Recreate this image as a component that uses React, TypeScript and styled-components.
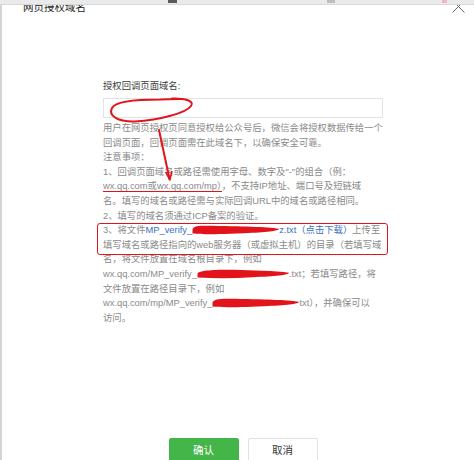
import React from 'react';
import styled, { createGlobalStyle } from 'styled-components';

const GlobalStyle = createGlobalStyle`
  html, body {
    margin: 0;
    padding: 0;
    background: #ffffff;
  }
  body {
    font-family: "Liberation Sans", "Noto Sans CJK SC", sans-serif;
  }
`;

const RED = '#e3131b';

const Page = styled.div`
  position: relative;
  width: 474px;
  height: 460px;
  overflow: hidden;
  background: #ffffff;
  display: flex;
  flex-direction: column;
`;

const TopStrip = styled.div`
  position: relative;
  z-index: 2;
  flex-shrink: 0;
  height: 5px;
  box-sizing: border-box;
  background: #eaeaea;
  border-bottom: 1px solid #d8d8d8;
  display: flex;
  align-items: flex-start;
`;

const StripMark = styled.span<{ $left: number; $width: number; $color: string }>`
  flex-shrink: 0;
  margin-left: ${(p) => p.$left}px;
  width: ${(p) => p.$width}px;
  height: 3px;
  background: ${(p) => p.$color};
`;

const Dialog = styled.div`
  flex: 1;
  width: 482px;
  flex-shrink: 0;
  border-left: 2px solid #d4d4d4;
  display: flex;
  flex-direction: column;
`;

const Header = styled.div`
  position: relative;
  z-index: 1;
  margin-top: -8px;
  height: 20px;
  padding: 0 19px 0 21px;
  display: flex;
  justify-content: space-between;
  align-items: flex-start;
`;

const Title = styled.div`
  font-size: 10.5px;
  line-height: 20px;
  color: #222222;
  font-family: "Liberation Sans", "Noto Sans CJK SC", sans-serif;
`;

const CloseIcon = styled.svg`
  margin-top: 3px;
  width: 13px;
  height: 13px;
`;

const Form = styled.div`
  width: 280px;
  margin: 62px auto 0;
  font-size: 9.33px;
  line-height: 14.6px;
`;

const Label = styled.div`
  color: #3c3c3c;
`;

const Input = styled.div`
  margin-top: 4.7px;
  height: 20px;
  box-sizing: border-box;
  border: 1px solid #e3e3e3;
  background: #ffffff;
`;

const Help = styled.div`
  margin-top: 2.7px;
  color: #8a8a8a;
`;

const Line = styled.div`
  white-space: nowrap;
`;

const Marked = styled.span`
  border-bottom: 1.4px solid ${RED};
`;

const Link = styled.span`
  color: #3b6fc2;
`;

const Boxed = styled.div`
  position: relative;
  &::after {
    content: "";
    position: absolute;
    left: -6px;
    right: -4.5px;
    top: -0.5px;
    bottom: -2.5px;
    border: 1.6px solid ${RED};
    border-radius: 3px;
    pointer-events: none;
  }
`;

const ScribbleSvg = styled.svg`
  display: inline-block;
  vertical-align: -2px;
  height: 10px;
`;

const Actions = styled.div`
  margin-top: 113px;
  display: flex;
  justify-content: center;
  gap: 9px;
`;

const Button = styled.button<{ $primary?: boolean }>`
  width: 70px;
  height: 24px;
  padding: 0;
  box-sizing: border-box;
  border-radius: 2px;
  border: 1px solid ${(p) => (p.$primary ? '#44b549' : '#e2e2e2')};
  background: ${(p) => (p.$primary ? '#44b549' : '#ffffff')};
  color: ${(p) => (p.$primary ? '#ffffff' : '#353535')};
  font-size: 10.5px;
  line-height: 22px;
  font-family: "Liberation Sans", "Noto Sans CJK SC", sans-serif;
`;

const Annotations = styled.svg`
  position: absolute;
  left: 0;
  top: 0;
  width: 474px;
  height: 460px;
  pointer-events: none;
  z-index: 3;
`;

// hand-drawn red redaction stroke, thick part at `thick` (0..1) of its width
function Scribble({ width, thick = 0.25 }: { width: number; thick?: number }) {
  const w = width;
  const t = w * thick;
  const d = `M0.5 5 C0.5 1.2 ${t * 0.5} 0.6 ${t} 0.8 C${w * 0.6} 1.2 ${w * 0.85} 2 ${w} 3.8 C${w} 6 ${w * 0.85} 7.4 ${w * 0.6} 8.2 C${t} 9.6 ${t * 0.5} 9.4 0.5 8.6 Z`;
  return (
    <ScribbleSvg width={w} viewBox={`0 0 ${w} 10`}>
      <path d={d} fill={RED} />
    </ScribbleSvg>
  );
}

export default function App() {
  return (
    <>
      <GlobalStyle />
      <Page>
        <TopStrip>
          <StripMark $left={168} $width={9} $color="#5a5a5a" />
          <StripMark $left={150} $width={8} $color="#bdbdbd" />
          <StripMark $left={107} $width={5} $color="#f0b7bc" />
        </TopStrip>
        <Dialog>
          <Header>
            <Title>网页授权域名</Title>
            <CloseIcon viewBox="0 0 13 13">
              <path d="M0.5 0.5 L12.5 12.5 M12.5 0.5 L0.5 12.5" stroke="#6a6a6a" strokeWidth="1" fill="none" />
            </CloseIcon>
          </Header>
          <Form>
            <Label>授权回调页面域名:</Label>
            <Input />
            <Help>
              <Line>用户在网页授权页同意授权给公众号后，微信会将授权数据传给一个</Line>
              <Line>回调页面，回调页面需在此域名下，以确保安全可靠。</Line>
              <Line>注意事项：</Line>
              <Line>1、回调页面域名或路径需使用字母、数字及"-"的组合（例：</Line>
              <Line>
                <Marked>wx.qq.com或wx.qq.com/mp）</Marked>，不支持IP地址、端口号及短链域
              </Line>
              <Line>名。填写的域名或路径需与实际回调URL中的域名或路径相同。</Line>
              <Line>2、填写的域名须通过ICP备案的验证。</Line>
              <Boxed>
                <Line>
                  3、将文件
                  <Link>
                    MP_verify_
                    <Scribble width={87} thick={0.15} />
                    z.txt（点击下载）
                  </Link>
                  上传至
                </Line>
                <Line>填写域名或路径指向的web服务器（或虚拟主机）的目录（若填写域</Line>
              </Boxed>
              <Line>名，将文件放置在域名根目录下，例如</Line>
              <Line>
                wx.qq.com/MP_verify_
                <Scribble width={92} thick={0.4} />
                .txt；若填写路径，将
              </Line>
              <Line>文件放置在路径目录下，例如</Line>
              <Line>
                wx.qq.com/mp/MP_verify_
                <Scribble width={87} thick={0.2} />
                txt），并确保可以
              </Line>
              <Line>访问。</Line>
            </Help>
          </Form>
          <Actions>
            <Button $primary>确认</Button>
            <Button>取消</Button>
          </Actions>
        </Dialog>
        <Annotations viewBox="0 0 474 460">
          <path
            d="M172 98.5 C185 98 195 101 191 106 C186 113 160 120 135 121.5 C118 122 108 116 112 108 C115 102 135 99.5 160 99.5 L178 99"
            stroke={RED}
            strokeWidth="2"
            fill="none"
            strokeLinecap="round"
          />
          <path d="M159 130 L169.5 179" stroke={RED} strokeWidth="2" fill="none" strokeLinecap="round" />
          <path d="M166 172.5 L169.8 180 L171.8 171.5" stroke={RED} strokeWidth="1.6" fill="none" strokeLinecap="round" strokeLinejoin="round" />
        </Annotations>
      </Page>
    </>
  );
}
